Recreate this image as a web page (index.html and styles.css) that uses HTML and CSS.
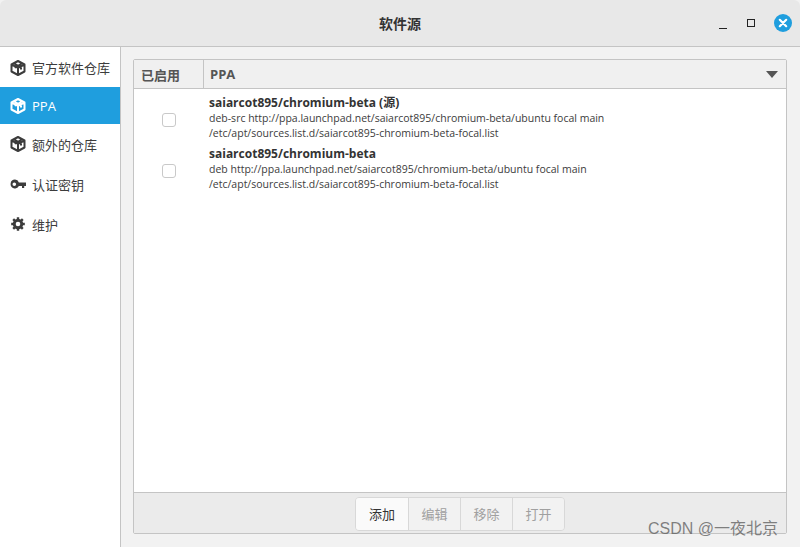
FILE: index.html
```html
<!DOCTYPE html>
<html lang="zh-CN">
<head>
    <meta charset="UTF-8">
    <meta name="viewport" content="width=device-width, initial-scale=1.0">
    <title>软件源</title>
    <link rel="stylesheet" href="styles.css">
</head>
<body>
    <svg class="defs" width="0" height="0">
        <symbol id="box" viewBox="0 0 16 16">
            <path d="M8 1 14.5 4.5V11.5L8 15 1.5 11.5V4.5Z M4.6 3.9 11 7.4M11.4 3.9 8 5.8 4.6 7.6M8 7.9 2 4.8M8 7.9 14 4.8M8 7.9V14.5M11 7.4V9.6" fill="none" stroke="currentColor" stroke-width="2" stroke-linejoin="round"/>
        </symbol>
    </svg>
    <header class="titlebar">
        <h1 class="title">软件源</h1>
        <div class="win-buttons">
            <span class="win-min"></span>
            <span class="win-max"></span>
            <span class="win-close">
                <svg width="18" height="18" viewBox="0 0 18 18"><path d="M5.8 5.8 12.2 12.2M12.2 5.8 5.8 12.2" stroke="#fff" stroke-width="2.2" stroke-linecap="round"/></svg>
            </span>
        </div>
    </header>
    <div class="window-body">
        <nav class="sidebar">
            <div class="nav-item first">
                <svg class="nav-icon" width="16" height="16"><use href="#box"/></svg>
                <span>官方软件仓库</span>
            </div>
            <div class="nav-item active">
                <svg class="nav-icon" width="16" height="16"><use href="#box"/></svg>
                <span>PPA</span>
            </div>
            <div class="nav-item">
                <svg class="nav-icon" width="16" height="16"><use href="#box"/></svg>
                <span>额外的仓库</span>
            </div>
            <div class="nav-item">
                <svg class="nav-icon" width="16" height="16" viewBox="0 0 16 16">
                    <path d="M5 3.6a4.4 4.4 0 1 0 3.9 6.400H12V12h2.200V10H16V6.600H8.900A4.400 4.400 0 0 0 5 3.600ZM4.300 6.400a1.800 1.800 0 1 1 0 3.600 1.800 1.800 0 0 1 0-3.600Z" fill="currentColor" fill-rule="evenodd"/>
                </svg>
                <span>认证密钥</span>
            </div>
            <div class="nav-item">
                <svg class="nav-icon" width="16" height="16" viewBox="0 0 16 16">
                    <circle cx="8" cy="8" r="3.900" fill="none" stroke="currentColor" stroke-width="2.600"/>
                    <path d="M8 1.200V14.800M1.200 8H14.800M3.200 3.200 12.800 12.800M12.800 3.200 3.200 12.800" stroke="currentColor" stroke-width="2.400"/>
                    <circle cx="8" cy="8" r="2.300" fill="#fff"/>
                </svg>
                <span>维护</span>
            </div>
        </nav>
        <main class="content">
            <section class="panel">
                <div class="table-head">
                    <div class="col-enabled">已启用</div>
                    <div class="col-ppa">PPA<span class="sort-arrow"></span></div>
                </div>
                <div class="ppa-list">
                    <div class="ppa-row">
                        <div class="check-cell"><span class="check"></span></div>
                        <div class="ppa-text">
                            <div class="ppa-name">saiarcot895/chromium-beta (源)</div>
                            <div class="ppa-line">deb-src http://ppa.launchpad.net/saiarcot895/chromium-beta/ubuntu focal main</div>
                            <div class="ppa-line">/etc/apt/sources.list.d/saiarcot895-chromium-beta-focal.list</div>
                        </div>
                    </div>
                    <div class="ppa-row">
                        <div class="check-cell"><span class="check"></span></div>
                        <div class="ppa-text">
                            <div class="ppa-name">saiarcot895/chromium-beta</div>
                            <div class="ppa-line">deb http://ppa.launchpad.net/saiarcot895/chromium-beta/ubuntu focal main</div>
                            <div class="ppa-line">/etc/apt/sources.list.d/saiarcot895-chromium-beta-focal.list</div>
                        </div>
                    </div>
                </div>
                <div class="toolbar">
                    <div class="btn-group">
                        <button class="btn">添加</button>
                        <button class="btn off">编辑</button>
                        <button class="btn off">移除</button>
                        <button class="btn off">打开</button>
                    </div>
                </div>
            </section>
        </main>
    </div>
    <div class="watermark">CSDN @一夜北京</div>
</body>
</html>
```

FILE: styles.css
```css
*{
    box-sizing: border-box;
}
html, body{
    height: 100%;
}
body{
    margin: 0;
    display: flex;
    flex-direction: column;
    overflow: hidden;
    background-color: #f2f2f2;
    color: #3c3c3c;
    font-family: "Open Sans", "Noto Sans CJK SC", sans-serif;
    font-size: 13px;
}
.defs{
    position: absolute;
}
.titlebar{
    flex: none;
    height: 47px;
    display: flex;
    align-items: center;
    justify-content: center;
    background-color: #e8e8e8;
    border-bottom: 1px solid #c4c4c4;
    border-radius: 6px 6px 0 0;
}
.title{
    margin: 0;
    font-size: 14px;
    font-weight: 700;
    color: #333;
}
.win-buttons{
    position: absolute;
    top: 14px;
    right: 8px;
    display: flex;
    align-items: center;
}
.win-min{
    width: 8px;
    height: 1px;
    margin: 11px 20px 0 0;
    background-color: #222;
}
.win-max{
    width: 8px;
    height: 8px;
    margin-right: 19px;
    border: 1px solid #222;
}
.win-close{
    width: 18px;
    height: 18px;
    border-radius: 50%;
    background-color: #1f9ede;
}
.win-close svg{
    display: block;
}
.window-body{
    flex: 1;
    display: flex;
    min-height: 0;
}
.sidebar{
    flex: none;
    width: 121px;
    padding-top: 1px;
    background-color: #fff;
    border-right: 1px solid #c4c4c4;
}
.nav-item{
    display: flex;
    align-items: center;
    gap: 6px;
    height: 40px;
    padding-left: 10px;
    font-size: 13px;
}
.nav-item.first{
    height: 39px;
}
.nav-item.active{
    height: 37px;
    background-color: #1f9ede;
    color: #fff;
}
.nav-icon{
    flex: none;
}
.content{
    flex: 1;
    padding: 12px 13px 13px 12px;
}
.panel{
    height: 100%;
    display: flex;
    flex-direction: column;
    background-color: #fff;
    border: 1px solid #c4c4c4;
    border-radius: 2px;
}
.table-head{
    flex: none;
    height: 29px;
    display: flex;
    background-color: #f0f0f0;
    border-bottom: 1px solid #c4c4c4;
    color: #555;
    font-weight: 700;
}
.col-enabled{
    flex: none;
    width: 70px;
    padding: 5px 0 0 7px;
    border-right: 1px solid #c4c4c4;
}
.col-ppa{
    flex: 1;
    position: relative;
    padding: 5px 0 0 6px;
}
.sort-arrow{
    position: absolute;
    top: 11px;
    right: 8px;
    border-left: 6px solid transparent;
    border-right: 6px solid transparent;
    border-top: 7px solid #555;
}
.ppa-list{
    flex: 1;
    padding-top: 6px;
}
.ppa-row{
    display: flex;
    height: 51px;
}
.check-cell{
    flex: none;
    width: 70px;
    display: flex;
    justify-content: center;
    align-items: center;
    padding-bottom: 2px;
}
.check{
    width: 14px;
    height: 14px;
    background-color: #fff;
    border: 1px solid #c9c9c9;
    border-radius: 3px;
}
.ppa-text{
    padding-left: 5px;
}
.ppa-name{
    height: 16px;
    line-height: 16px;
    font-size: 12px;
    font-weight: 700;
    color: #333;
}
.ppa-line{
    height: 15px;
    line-height: 15px;
    font-size: 10.500px;
    color: #3c3c3c;
    white-space: nowrap;
}
.toolbar{
    flex: none;
    height: 41px;
    display: flex;
    justify-content: center;
    align-items: center;
    padding-top: 1px;
    background-color: #ebebeb;
    border-top: 1px solid #c4c4c4;
}
.btn-group{
    display: flex;
    height: 34px;
    border: 1px solid #d8d8d8;
    border-radius: 4px;
    overflow: hidden;
}
.btn{
    width: 52px;
    padding: 0;
    border: 0;
    border-left: 1px solid #d8d8d8;
    background-color: #fafafa;
    color: #333;
    font-family: inherit;
    font-size: 13px;
}
.btn:first-child{
    border-left: 0;
}
.btn.off{
    background-color: #f2f2f2;
    color: #a0a0a0;
}
.watermark{
    position: absolute;
    top: 518px;
    left: 648px;
    color: rgba(90, 90, 90, 0.75);
    font-family: "Liberation Sans", "Noto Sans CJK SC", sans-serif;
    font-size: 16px;
    line-height: 22px;
    white-space: nowrap;
}
```
